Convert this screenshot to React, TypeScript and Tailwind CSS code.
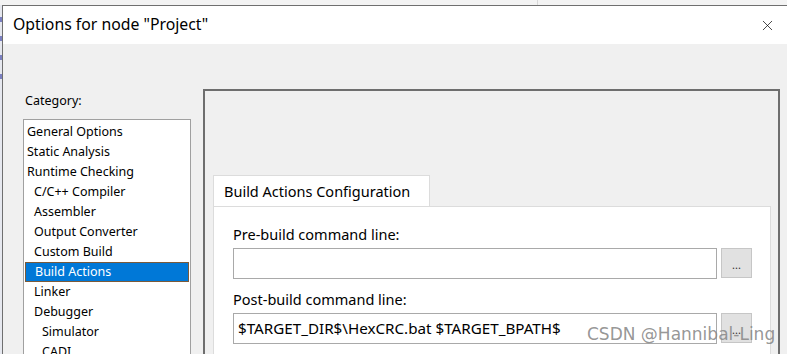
import { X } from "lucide-react"

const categories = [
  { label: "General Options", indent: 0 },
  { label: "Static Analysis", indent: 0 },
  { label: "Runtime Checking", indent: 0 },
  { label: "C/C++ Compiler", indent: 1 },
  { label: "Assembler", indent: 1 },
  { label: "Output Converter", indent: 1 },
  { label: "Custom Build", indent: 1 },
  { label: "Build Actions", indent: 1, selected: true },
  { label: "Linker", indent: 1 },
  { label: "Debugger", indent: 1 },
  { label: "Simulator", indent: 2 },
  { label: "CADI", indent: 2 },
]

function CommandField({ label, value }: { label: string; value?: string }) {
  return (
    <div className="flex flex-col">
      <div className="text-[14.5px] leading-[20px] text-black h-[20px]">{label}</div>
      <div className="flex gap-[4px] mt-[4px]">
        <div className="w-[484px] h-[31px] bg-white border border-[#a9a9a9] px-[4px] flex items-center text-[15.2px] text-black whitespace-nowrap">
          {value}
        </div>
        <button className="w-[31px] h-[30px] bg-[#e1e1e1] border border-[#c6c6c6] text-[11px] text-[#333] leading-none pt-[3px]">
          ...
        </button>
      </div>
    </div>
  )
}

export default function App() {
  return (
    <div
      className="w-[787px] h-[354px] overflow-hidden bg-[#f3f3f3] flex flex-col relative"
      style={{ fontFamily: '"Noto Sans", "Open Sans", sans-serif' }}
    >
      {/* background behind the dialog */}
      <div className="h-[5px] flex shrink-0">
        <div className="w-[538px] border-r border-[#d8d8d8]" />
        <div className="flex-1" />
      </div>

      <div className="flex-1 flex">
        <div className="w-[2px] bg-[#e6e8ef] flex flex-col gap-[14px] pt-[12px]">
          <div className="h-[5px] bg-[#7a7fc0]" />
          <div className="h-[5px] bg-[#7a7fc0]" />
          <div className="h-[5px] bg-[#7a7fc0]" />
          <div className="h-[5px] bg-[#7a7fc0]" />
        </div>

        <div className="flex-1 flex flex-col border-l border-t border-[#6f6f6f]">
          {/* title bar */}
          <div className="h-[38px] bg-white flex items-center justify-between pl-[10px] pr-[11px] shrink-0">
            <span className="text-[15.8px] text-black">Options for node "Project"</span>
            <X className="w-[17px] h-[17px] text-black" strokeWidth={1} />
          </div>

          {/* body */}
          <div className="flex-1 bg-[#f0f0f0] flex">
            <div className="w-[200px] shrink-0 pl-[20px] pt-[49px]">
              <div className="text-[12.5px] leading-[16px] text-black pl-[2px]">Category:</div>
              <div className="mt-[10px] w-[168px] h-[300px] bg-white border border-[#a0a0a0] pt-[2px] pl-[1px]">
                {categories.map((c) => (
                  <div
                    key={c.label}
                    className={
                      c.selected
                        ? "h-[20px] w-[164px] flex items-center bg-[#0078d7] text-white border border-[#7a5a3a] text-[12.5px]"
                        : "h-[20px] w-[164px] flex items-center text-black text-[12.5px]"
                    }
                  >
                    <span
                      className={
                        c.indent === 0 ? "pl-[2px]" : c.indent === 1 ? "pl-[9px]" : "pl-[17px]"
                      }
                    >
                      {c.label}
                    </span>
                  </div>
                ))}
              </div>
            </div>

            <div className="flex-1 pt-[45px] pr-[7px]">
              <div className="h-full border-l-2 border-t-2 border-r-2 border-[#6e6e6e] pl-[8px] pr-[7px] pt-[84px] flex flex-col">
                <div className="w-[217px] h-[32px] bg-white border-t border-l border-r border-[#dcdcdc] flex items-center pl-[10px] text-[14.5px] text-black">
                  Build Actions Configuration
                </div>
                <div className="flex-1 bg-white border border-[#dcdcdc] -mt-[1px] pl-[19px] pt-[17px] flex flex-col gap-[10px]">
                  <CommandField label="Pre-build command line:" />
                  <CommandField
                    label="Post-build command line:"
                    value="$TARGET_DIR$\HexCRC.bat $TARGET_BPATH$"
                  />
                </div>
              </div>
            </div>
          </div>
        </div>
      </div>

      <div
        className="absolute left-[587px] top-[322px] text-[17px] text-[#8a8a8a]/90"
        style={{ fontFamily: '"DejaVu Sans", sans-serif' }}
      >
        CSDN @Hannibal-Ling
      </div>
    </div>
  )
}
